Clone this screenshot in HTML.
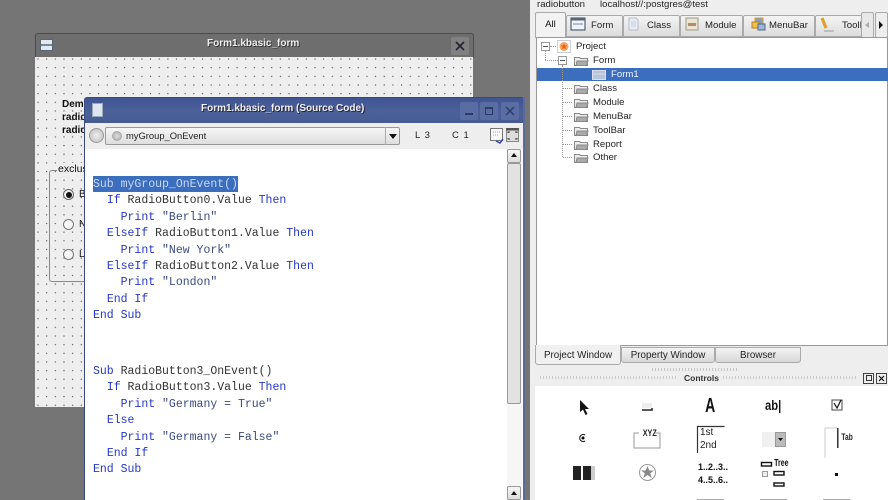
<!DOCTYPE html>
<html><head><meta charset="utf-8"><style>
html,body{margin:0;padding:0}
body{width:888px;height:500px;overflow:hidden;position:relative;background:#757575;font-family:"Liberation Sans",sans-serif;font-size:10px;color:#111}
.a{position:absolute}
.t{position:absolute;white-space:nowrap;line-height:12px}
pre{position:absolute;margin:0;font:11.5px/16.4px "Liberation Mono",monospace;color:#333}
b.k{font-weight:normal;color:#2438c4}
i.s{font-style:normal;color:#3a4a80}
.tab{position:absolute;top:15px;height:22px;background:linear-gradient(#f4f4f4,#dcdcdc);border:1px solid #aaa;border-radius:2px 2px 0 0;box-sizing:border-box}
.lb{position:absolute;top:20px;font-size:9.6px;line-height:12px;color:#222;white-space:nowrap}
.tl{position:absolute;left:593px;font-size:9.6px;line-height:12px;color:#222;white-space:nowrap}
.fold{position:absolute;left:574px;width:15px;height:11px}
.stub{position:absolute;left:563px;width:9px;border-top:1px dotted #999}
.btab{position:absolute;top:347px;height:16px;background:linear-gradient(#f4f4f4,#d8d8d8);border:1px solid #aaa;box-sizing:border-box;text-align:center;font-size:9.8px;line-height:15px;border-radius:0 0 3px 3px;color:#222}
.wb{position:absolute;top:102px;width:18px;height:18px;background:#5a6da2;border-radius:2px}
</style></head><body>

<!-- Form window -->
<div class="a" style="left:35px;top:33px;width:439px;height:25px;background:#6e6e6e;border:1px solid #4c4c4c;border-bottom:1px solid #555;box-sizing:border-box;border-radius:3px 3px 0 0"></div>
<div class="a" style="left:35px;top:57px;width:438px;height:350px;background-color:#eeeeee;background-image:radial-gradient(circle at 1px 1px,#555 .5px,transparent .85px);background-size:8.67px 8.67px;background-position:2px 1px"></div>
<div class="a" style="left:40px;top:39px;width:13px;height:12px;background:#e4e8f0;border:1px solid #567;box-sizing:border-box"></div>
<div class="a" style="left:41px;top:44px;width:11px;height:2px;background:#789"></div>
<div class="t" style="left:207px;top:38px;font-size:10px;font-weight:bold;color:#eee;text-shadow:1px 1px 0 #333">Form1.kbasic_form</div>
<div class="a" style="left:451px;top:37px;width:18px;height:18px;background:#808080;border-radius:2px"></div>
<svg class="a" style="left:451px;top:37px" width="18" height="18"><path d="M5 5l8 8M13 5l-8 8" stroke="#223" stroke-width="1.6"/></svg>
<div class="t" style="left:62px;top:98px;font-size:10px;font-weight:bold;line-height:13px;color:#111">Dem<br>radic<br>radic</div>
<div class="a" style="left:49px;top:170px;width:50px;height:112px;border:1px solid #888;border-right:0;border-radius:3px;box-sizing:border-box"></div>
<div class="t" style="left:57px;top:163px;font-size:10.5px;background:#eee;padding:0 1px">exclus</div>
<div class="a" style="left:63px;top:189px;width:11px;height:11px;background:#eee;border:1px solid #666;border-radius:50%;box-sizing:border-box"></div>
<div class="a" style="left:65.5px;top:191.5px;width:6px;height:6px;background:#111;border-radius:50%"></div>
<div class="a" style="left:63px;top:219px;width:11px;height:11px;background:#f6f6f6;border:1px solid #777;border-radius:50%;box-sizing:border-box"></div>
<div class="a" style="left:63px;top:249px;width:11px;height:11px;background:#f6f6f6;border:1px solid #777;border-radius:50%;box-sizing:border-box"></div>
<div class="t" style="left:79px;top:189px">B</div>
<div class="t" style="left:79px;top:219px">N</div>
<div class="t" style="left:79px;top:249px">L</div>

<!-- Source window -->
<div class="a" style="left:84px;top:97px;width:440px;height:403px;background:#fff;border:1px solid #36497f;border-bottom:0;box-sizing:border-box;border-radius:3px 3px 0 0"></div>
<div class="a" style="left:85px;top:98px;width:438px;height:25px;background:linear-gradient(#3f5593,#4d6199 60%,#465a93)"></div>
<div class="a" style="left:92px;top:103px;width:11px;height:14px;background:#dfe5f0;border:1px solid #9ab;box-sizing:border-box"></div>
<div class="t" style="left:201px;top:103px;font-size:10px;font-weight:bold;color:#f2f2f2;text-shadow:1px 1px 0 #223">Form1.kbasic_form (Source Code)</div>
<div class="wb" style="left:460px"></div><div class="wb" style="left:480px"></div><div class="wb" style="left:501px"></div>
<div class="a" style="left:465px;top:113px;width:8px;height:2px;background:#2b3a6a"></div>
<div class="a" style="left:485px;top:107px;width:8px;height:8px;border:1px solid #2b3a6a;box-sizing:border-box;border-top-width:2px"></div>
<svg class="a" style="left:501px;top:102px" width="18" height="18"><path d="M5 5l8 8M13 5l-8 8" stroke="#2b3a6a" stroke-width="1.4"/></svg>

<div class="a" style="left:85px;top:123px;width:438px;height:26px;background:#eeeeee"></div>
<div class="a" style="left:89px;top:128px;width:15px;height:15px;background:radial-gradient(#eee,#bbb);border:1px solid #999;border-radius:50%;box-sizing:border-box"></div>
<div class="a" style="left:105px;top:127px;width:295px;height:18px;background:linear-gradient(#f6f6f6,#dedede);border:1px solid #999;border-radius:2px;box-sizing:border-box"></div>
<div class="a" style="left:112px;top:131px;width:10px;height:10px;background:radial-gradient(#ddd,#aaa);border:1px solid #aaa;border-radius:50%;box-sizing:border-box"></div>
<div class="t" style="left:126px;top:129px;font-size:9.4px;line-height:13px;color:#222">myGroup_OnEvent</div>
<div class="a" style="left:385px;top:127px;width:1px;height:18px;background:#aaa"></div>
<div class="a" style="left:389px;top:134px;border:4px solid transparent;border-top:5px solid #111;border-bottom:0"></div>
<div class="t" style="left:415px;top:130px;font-size:9.5px;letter-spacing:1px;color:#222">L 3</div>
<div class="t" style="left:452px;top:130px;font-size:9.5px;letter-spacing:1px;color:#222">C 1</div>
<svg class="a" style="left:489px;top:127px" width="32" height="18">
<rect x="1.5" y="1.5" width="12" height="12" fill="#f8f8f8" stroke="#777"/><path d="M4 5h7M4 8h5" stroke="#aaa" stroke-dasharray="1 1"/><path d="M7 14l4 2 3-4" fill="none" stroke="#2f48c0" stroke-width="1.5"/>
<rect x="17.5" y="1.5" width="12" height="13" fill="#ddd" stroke="#888"/><rect x="17" y="1" width="13" height="2.5" fill="#555"/><path d="M19 6v-1h2M28 6v-1h-2M19 11v1h2M28 11v1h-2" stroke="#333" fill="none"/>
</svg>

<div class="a" style="left:93px;top:176px;width:145px;height:16px;background:#3c6ebe"></div>
<pre style="left:93px;top:177px"><span style="color:#c8d8f8">Sub myGroup_OnEvent()</span>
  <b class="k">If</b> RadioButton0.Value <b class="k">Then</b>
    <b class="k">Print</b> <i class="s">"Berlin"</i>
  <b class="k">ElseIf</b> RadioButton1.Value <b class="k">Then</b>
    <b class="k">Print</b> <i class="s">"New York"</i>
  <b class="k">ElseIf</b> RadioButton2.Value <b class="k">Then</b>
    <b class="k">Print</b> <i class="s">"London"</i>
  <b class="k">End If</b>
<b class="k">End Sub</b></pre>
<pre style="left:93px;top:364px"><b class="k">Sub</b> RadioButton3_OnEvent()
  <b class="k">If</b> RadioButton3.Value <b class="k">Then</b>
    <b class="k">Print</b> <i class="s">"Germany = True"</i>
  <b class="k">Else</b>
    <b class="k">Print</b> <i class="s">"Germany = False"</i>
  <b class="k">End If</b>
<b class="k">End Sub</b></pre>

<!-- Scrollbar -->
<div class="a" style="left:507px;top:149px;width:15px;height:351px;background:#f6f6f6"></div>
<div class="a" style="left:507px;top:149px;width:14px;height:14px;background:linear-gradient(#f6f6f6,#ddd);border:1px solid #999;box-sizing:border-box;border-radius:2px"></div>
<div class="a" style="left:510.5px;top:153px;border:3.5px solid transparent;border-bottom:4px solid #111;border-top:0"></div>
<div class="a" style="left:507px;top:163px;width:14px;height:241px;background:#e2e2e2;border:1px solid #999;box-sizing:border-box;border-radius:2px"></div>
<div class="a" style="left:507px;top:486px;width:14px;height:14px;background:linear-gradient(#f6f6f6,#ddd);border:1px solid #999;box-sizing:border-box;border-radius:2px"></div>
<div class="a" style="left:510.5px;top:491px;border:3.5px solid transparent;border-bottom:4px solid #111;border-top:0"></div>
<div class="a" style="left:523px;top:97px;width:2px;height:403px;background:#5a6a96"></div>

<!-- Right panel -->
<div class="a" style="left:530px;top:0;width:358px;height:500px;background:#eeeeee"></div>
<div class="t" style="left:537px;top:-1px;font-size:9.6px;color:#222">radiobutton</div>
<div class="t" style="left:600px;top:-1px;font-size:9.6px;color:#222">localhost//:postgres@test</div>

<div class="tab" style="left:566px;width:57px"></div>
<div class="tab" style="left:623px;width:57px"></div>
<div class="tab" style="left:680px;width:63px"></div>
<div class="tab" style="left:743px;width:72px"></div>
<div class="tab" style="left:815px;width:48px"></div>
<div class="tab" style="left:535px;top:12px;width:31px;height:26px;background:#f2f2f2;border-bottom:0;text-align:center;line-height:23px;font-size:9.6px">All</div>
<svg class="a" style="left:566px;top:15px" width="270" height="20">
<rect x="5" y="3" width="14" height="12" fill="#f0f4fa" stroke="#345"/><rect x="5" y="3" width="14" height="2.5" fill="#567"/><path d="M7 9h10" stroke="#789"/>
<path d="M63 3h7l2 2v10h-9z" fill="#e8ecf4" stroke="#bbc"/><path d="M65 7h5M65 9h5M65 11h5" stroke="#ccd"/>
<rect x="120" y="3" width="12" height="12" fill="#ece4d4" stroke="#998"/><path d="M122 8h8v3h-8z" fill="#b86"/>
<rect x="189" y="3" width="8" height="6" fill="#7aa0d8" stroke="#d9a020"/><rect x="186" y="7" width="7" height="6" fill="#f0c050" stroke="#c08010"/><rect x="192" y="9" width="7" height="6" fill="#9ab8e0" stroke="#567"/>
<path d="M256 3l4 10" stroke="#e0a030" stroke-width="3.2"/><path d="M258 16h10" stroke="#999"/>
</svg>
<div class="lb" style="left:591px">Form</div>
<div class="lb" style="left:647px">Class</div>
<div class="lb" style="left:705px">Module</div>
<div class="lb" style="left:769px">MenuBar</div>
<div class="lb" style="left:842px">ToolE</div>
<div class="a" style="left:861px;top:12px;width:13px;height:26px;background:#e8e8e8;border:1px solid #aaa;box-sizing:border-box;border-radius:2px"></div>
<div class="a" style="left:875px;top:12px;width:13px;height:26px;background:#eee;border:1px solid #aaa;box-sizing:border-box;border-radius:2px"></div>
<div class="a" style="left:865px;top:22px;border:3px solid transparent;border-right:4px solid #aaa;border-left:0"></div>
<div class="a" style="left:879px;top:21px;border:4px solid transparent;border-left:4px solid #111;border-right:0"></div>

<!-- Tree -->
<div class="a" style="left:536px;top:37px;width:352px;height:309px;background:#fff;border:1px solid #999;box-sizing:border-box"></div>
<div class="a" style="left:537px;top:68px;width:351px;height:13px;background:#3c6ebe"></div>
<div class="a" style="left:545px;top:50px;height:10px;border-left:1px dotted #999"></div>
<div class="a" style="left:545px;top:60px;width:13px;border-top:1px dotted #999"></div>
<div class="a" style="left:550px;top:46px;width:8px;border-top:1px dotted #999"></div>
<div class="a" style="left:562px;top:65px;height:92px;border-left:1px dotted #999"></div>
<div class="stub" style="top:88px"></div><div class="stub" style="top:102px"></div><div class="stub" style="top:116px"></div><div class="stub" style="top:130px"></div><div class="stub" style="top:144px"></div><div class="stub" style="top:157px"></div>
<div class="a" style="left:541px;top:42px;width:9px;height:9px;background:#fff;border:1px solid #999;box-sizing:border-box"></div>
<div class="a" style="left:543px;top:46px;width:5px;height:1px;background:#555"></div>
<div class="a" style="left:558px;top:56px;width:9px;height:9px;background:#fff;border:1px solid #999;box-sizing:border-box"></div>
<div class="a" style="left:560px;top:60px;width:5px;height:1px;background:#555"></div>
<svg class="a" style="left:557px;top:40px" width="14" height="13"><rect x=".5" y=".5" width="13" height="12" fill="#fff" stroke="#ccd"/><circle cx="7" cy="6.5" r="4.5" fill="#f8a860"/><path d="M7 3l1 2.5h2.5l-2 1.5.8 2.5L7 8l-2.300 1.500.8-2.500-2-1.500H6z" fill="#e8641c"/></svg>
<div class="t" style="left:576px;top:41px;font-size:9.6px;color:#222">Project</div>
<div class="t" style="left:593px;top:55px;font-size:9.6px;color:#222">Form</div>
<div class="t" style="left:611px;top:69px;font-size:9.6px;color:#f0f4ff">Form1</div>
<svg class="a" style="left:592px;top:70px" width="14" height="10"><rect x=".5" y=".5" width="13" height="9" fill="#b8c4d8" stroke="#dde"/><path d="M1 4h12" stroke="#dde"/></svg>
<svg class="fold" style="top:55px"><path d="M.5 2.500h5l1 1h7v7H.5z" fill="#eee" stroke="#888"/><path d="M3 6h11l-1.500 4.500H2z" fill="#aaa" stroke="#888"/></svg>
<svg class="fold" style="top:83px"><path d="M.5 2.500h5l1 1h7v7H.5z" fill="#eee" stroke="#888"/><path d="M3 6h11l-1.500 4.500H2z" fill="#aaa" stroke="#888"/></svg>
<svg class="fold" style="top:97px"><path d="M.5 2.500h5l1 1h7v7H.5z" fill="#eee" stroke="#888"/><path d="M3 6h11l-1.500 4.500H2z" fill="#aaa" stroke="#888"/></svg>
<svg class="fold" style="top:111px"><path d="M.5 2.500h5l1 1h7v7H.5z" fill="#eee" stroke="#888"/><path d="M3 6h11l-1.500 4.500H2z" fill="#aaa" stroke="#888"/></svg>
<svg class="fold" style="top:125px"><path d="M.5 2.500h5l1 1h7v7H.5z" fill="#eee" stroke="#888"/><path d="M3 6h11l-1.500 4.500H2z" fill="#aaa" stroke="#888"/></svg>
<svg class="fold" style="top:139px"><path d="M.5 2.500h5l1 1h7v7H.5z" fill="#eee" stroke="#888"/><path d="M3 6h11l-1.500 4.500H2z" fill="#aaa" stroke="#888"/></svg>
<svg class="fold" style="top:152px"><path d="M.5 2.500h5l1 1h7v7H.5z" fill="#eee" stroke="#888"/><path d="M3 6h11l-1.500 4.500H2z" fill="#aaa" stroke="#888"/></svg>
<div class="tl" style="top:83px">Class</div>
<div class="tl" style="top:97px">Module</div>
<div class="tl" style="top:111px">MenuBar</div>
<div class="tl" style="top:125px">ToolBar</div>
<div class="tl" style="top:139px">Report</div>
<div class="tl" style="top:152px">Other</div>

<!-- Bottom tabs -->
<div class="btab" style="left:621px;width:94px;line-height:16px">Property Window</div>
<div class="btab" style="left:715px;width:86px;line-height:16px">Browser</div>
<div class="btab" style="left:535px;top:345px;width:86px;height:20px;background:#f0f0f0;border-top:0;line-height:21px">Project Window</div>
<div class="a" style="left:652px;top:368px;width:85px;height:3px;background:repeating-linear-gradient(90deg,#c4c4c4 0 1px,transparent 1px 3px)"></div>
<div class="a" style="left:540px;top:376px;width:138px;height:3px;background:repeating-linear-gradient(90deg,#ccc 0 1px,transparent 1px 3px)"></div>
<div class="a" style="left:723px;top:376px;width:135px;height:3px;background:repeating-linear-gradient(90deg,#ccc 0 1px,transparent 1px 3px)"></div>
<div class="t" style="left:684px;top:372px;font-size:8.5px;font-weight:bold;color:#333">Controls</div>
<div class="a" style="left:863px;top:373px;width:11px;height:11px;border:1px solid #444;box-sizing:border-box;background:#eee"></div>
<div class="a" style="left:866px;top:375px;width:6px;height:6px;border:1px solid #333;box-sizing:border-box"></div>
<div class="a" style="left:876px;top:373px;width:11px;height:11px;border:1px solid #444;box-sizing:border-box;background:#eee"></div>
<svg class="a" style="left:876px;top:373px" width="11" height="11"><path d="M3 3l5 5M8 3l-5 5" stroke="#111" stroke-width="1.200"/></svg>

<!-- Controls -->
<div class="a" style="left:535px;top:386px;width:353px;height:114px;background:#fff"></div>
<svg class="a" style="left:535px;top:386px" width="353" height="114">
<path d="M45 14v12l3-2.500 2.500 5.500 2-1-2.500-5h4z" fill="#111"/>
<rect x="107" y="17" width="10" height="5" fill="#eee"/><path d="M117 22v2h-10" stroke="#222" stroke-width="1.500" fill="none"/>
<path d="M297 14h10v10h-10z" fill="none" stroke="#444"/>
<path d="M299 17l3 5 4-8" fill="none" stroke="#111" stroke-width="1.200"/>
<path d="M50 49a3.500 3.500 0 1 0 0 6" fill="none" stroke="#222" stroke-width="1.200"/><circle cx="48" cy="52" r="1.500" fill="#000"/>
<path d="M104 47h-5v15h26v-15h-5" fill="none" stroke="#999"/>
<path d="M162.500 67V40.500h27" fill="none" stroke="#333" stroke-width="1.200"/>
<rect x="227" y="46" width="24" height="15" fill="#f0f0f0"/><rect x="240.500" y="46.500" width="10" height="14" fill="#bbb" stroke="#999"/><path d="M243 52h5l-2.500 3z" fill="#111"/>
<path d="M302 42h-12v30" fill="none" stroke="#ccc"/><rect x="302" y="42" width="1.500" height="20" fill="#333"/>
<rect x="38" y="80" width="8" height="14" fill="#222"/><rect x="48" y="80" width="8" height="14" fill="#222"/><rect x="56" y="80" width="4" height="14" fill="#ccc"/>
<circle cx="112.500" cy="86.500" r="8" fill="#fff" stroke="#999"/><path d="M112.500 80l1.800 4.500h4.700l-3.800 2.800 1.500 4.700-4.200-3-4.200 3 1.500-4.700-3.800-2.800h4.700z" fill="#888"/>
<rect x="226.500" y="76.500" width="10" height="3.500" fill="none" stroke="#111" stroke-width="1.400"/>
<rect x="239" y="85.500" width="10" height="3.500" fill="none" stroke="#111" stroke-width="1.400"/>
<rect x="239" y="97" width="10" height="3" fill="none" stroke="#111" stroke-width="1.400"/>
<rect x="227.500" y="85.500" width="5" height="5" fill="#eee" stroke="#999"/>
<rect x="300" y="87" width="3" height="3" fill="#111"/>
<rect x="162" y="113" width="27" height="1" fill="#aaa"/><rect x="225" y="113" width="27" height="1" fill="#aaa"/><rect x="288" y="113" width="27" height="1" fill="#aaa"/>
</svg>
<div class="t" style="left:703px;top:396px;font-size:20px;line-height:20px;font-weight:bold;transform:scaleX(.7);color:#111">A</div>
<div class="t" style="left:763px;top:398px;font-size:14px;line-height:14px;font-weight:bold;transform:scaleX(.8);color:#111">ab|</div>
<div class="t" style="left:640px;top:427px;font-size:9px;font-weight:bold;padding:0 1px;transform:scaleX(.8);color:#222">XYZ</div>
<div class="t" style="left:700px;top:427px;font-size:10px;line-height:12.5px;color:#222">1st<br>2nd</div>
<div class="t" style="left:839px;top:432px;font-size:9.500px;font-weight:bold;transform:scaleX(.7);color:#222">Tab</div>
<div class="t" style="left:698px;top:461px;font-size:9px;line-height:13px;font-weight:bold;color:#111">1..2..3..<br>4..5..6..</div>
<div class="t" style="left:771px;top:458px;font-size:10px;font-weight:bold;transform:scaleX(.7);color:#111">Tree</div>

</body></html>
